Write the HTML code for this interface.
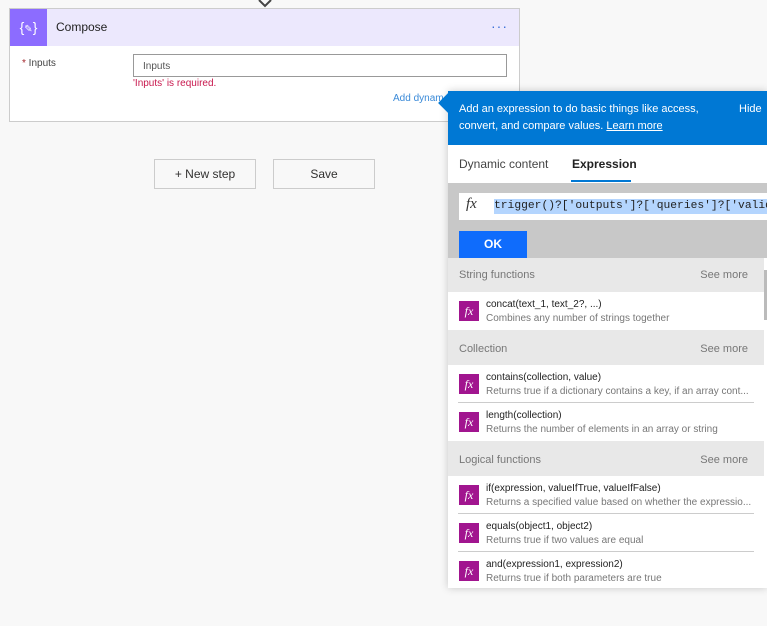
<!DOCTYPE html>
<html><head><meta charset="utf-8"><style>
*{box-sizing:border-box;margin:0;padding:0}
body{width:767px;height:626px;background:#f8f8f8;font-family:"Liberation Sans",sans-serif;position:relative;overflow:hidden;color:#323130}
.a{position:absolute}
.fx{position:absolute;left:11px;width:20px;height:20px;background:#a1158f;color:#fff;font-family:"Liberation Serif",serif;font-style:italic;font-size:12px;text-align:center;line-height:20px}
.it{position:absolute;left:448px;width:316px;background:#fff}
.it .t{position:absolute;left:38px;font-size:10px;color:#222}
.it .d{position:absolute;left:38px;font-size:10px;color:#777;white-space:nowrap}
.it .ln{position:absolute;left:10px;right:10px;bottom:0;height:1px;background:#ccc}
.hd{position:absolute;left:448px;width:316px;background:#e8e8e8;font-size:11px;color:#777}
.hd span{position:absolute;left:11px}
.hd b{position:absolute;right:16px;font-weight:normal}
</style></head><body>
<svg class="a" style="left:256px;top:0" width="18" height="8"><path d="M3 0 L9 6 L15 0" stroke="#444" stroke-width="2" fill="none"/></svg>
<div class="a" style="left:9px;top:8px;width:511px;height:114px;background:#fff;border:1px solid #ccc"></div>
<div class="a" style="left:10px;top:9px;width:509px;height:37px;background:#ece8fd"></div>
<div class="a" style="left:10px;top:9px;width:37px;height:37px;background:#8c6cff;color:#fff;font-size:14px;text-align:center;line-height:36px">{<span style="font-size:10px">✎</span>}</div>
<div class="a" style="left:56px;top:20px;font-size:12px;color:#222">Compose</div>
<div class="a" style="left:491px;top:18px;font-size:14px;color:#3a6fd8;letter-spacing:1px">···</div>
<div class="a" style="left:22px;top:58px;font-size:10px;color:#444"><span style="color:#a4262c">*</span> Inputs</div>
<div class="a" style="left:133px;top:54px;width:374px;height:23px;border:1px solid #999;background:#fff;font-size:10px;color:#555;padding:6px 9px">Inputs</div>
<div class="a" style="left:133px;top:78px;font-size:10px;color:#c8174d">'Inputs' is required.</div>
<div class="a" style="left:393px;top:93px;font-size:10px;color:#3a8ad8">Add dynam</div>
<div class="a" style="left:154px;top:159px;width:102px;height:30px;border:1px solid #ccc;background:#f8f8f8;font-size:12px;text-align:center;line-height:28px">+ New step</div>
<div class="a" style="left:273px;top:159px;width:102px;height:30px;border:1px solid #ccc;background:#f8f8f8;font-size:12px;text-align:center;line-height:28px">Save</div>
<div class="a" style="left:448px;top:91px;width:319px;height:497px;background:#fff;box-shadow:0 0 8px rgba(0,0,0,.2)"></div>
<div class="a" style="left:441px;top:96px;width:14px;height:14px;background:#0078d4;transform:rotate(45deg)"></div>
<div class="a" style="left:448px;top:91px;width:319px;height:54px;background:#0078d4;color:#fff;font-size:11px;line-height:17px;padding:10px 0 0 11px">Add an expression to do basic things like access,<br>convert, and compare values. <u>Learn more</u></div>
<div class="a" style="left:739px;top:101px;color:#fff;font-size:11px;line-height:17px">Hide</div>
<div class="a" style="left:459px;top:157px;font-size:12px;color:#444">Dynamic content</div>
<div class="a" style="left:572px;top:157px;font-size:12px;color:#222;font-weight:bold">Expression</div>
<div class="a" style="left:571px;top:180px;width:60px;height:2px;background:#0078d4"></div>
<div class="a" style="left:448px;top:183px;width:319px;height:75px;background:#c8c8c8"></div>
<div class="a" style="left:459px;top:193px;width:308px;height:27px;background:#fff"></div>
<div class="a" style="left:466px;top:196px;font-family:'Liberation Serif',serif;font-style:italic;font-size:15px;color:#333">fx</div>
<div class="a" style="left:494px;top:199px;height:15px;background:#b4d5fe;font-family:'Liberation Mono',monospace;font-size:11.3px;color:#222;line-height:15px;white-space:nowrap">trigger()?['outputs']?['queries']?['valida</div>
<div class="a" style="left:459px;top:231px;width:68px;height:27px;background:#0f6cfc;color:#fff;font-size:12px;font-weight:bold;text-align:center;line-height:27px">OK</div>
<div class="a" style="left:764px;top:270px;width:3px;height:50px;background:#bbb"></div>
<div class="hd" style="top:258px;height:34px"><span style="top:11px">String functions</span><b style="top:11px">See more</b></div>
<div class="it" style="top:292px;height:36px"><div class="fx" style="top:9px">fx</div><div class="t" style="top:7px">concat(text_1, text_2?, ...)</div><div class="d" style="top:21px">Combines any number of strings together</div></div>
<div class="hd" style="top:330px;height:35px"><span style="top:13px">Collection</span><b style="top:13px">See more</b></div>
<div class="it" style="top:365px;height:38px"><div class="fx" style="top:9px">fx</div><div class="t" style="top:7px">contains(collection, value)</div><div class="d" style="top:21px">Returns true if a dictionary contains a key, if an array cont...</div><div class="ln"></div></div>
<div class="it" style="top:403px;height:38px"><div class="fx" style="top:9px">fx</div><div class="t" style="top:7px">length(collection)</div><div class="d" style="top:21px">Returns the number of elements in an array or string</div></div>
<div class="hd" style="top:441px;height:35px"><span style="top:13px">Logical functions</span><b style="top:13px">See more</b></div>
<div class="it" style="top:476px;height:38px"><div class="fx" style="top:9px">fx</div><div class="t" style="top:7px">if(expression, valueIfTrue, valueIfFalse)</div><div class="d" style="top:21px">Returns a specified value based on whether the expressio...</div><div class="ln"></div></div>
<div class="it" style="top:514px;height:38px"><div class="fx" style="top:9px">fx</div><div class="t" style="top:7px">equals(object1, object2)</div><div class="d" style="top:21px">Returns true if two values are equal</div><div class="ln"></div></div>
<div class="it" style="top:552px;height:36px"><div class="fx" style="top:9px">fx</div><div class="t" style="top:7px">and(expression1, expression2)</div><div class="d" style="top:21px">Returns true if both parameters are true</div></div>
</body></html>
